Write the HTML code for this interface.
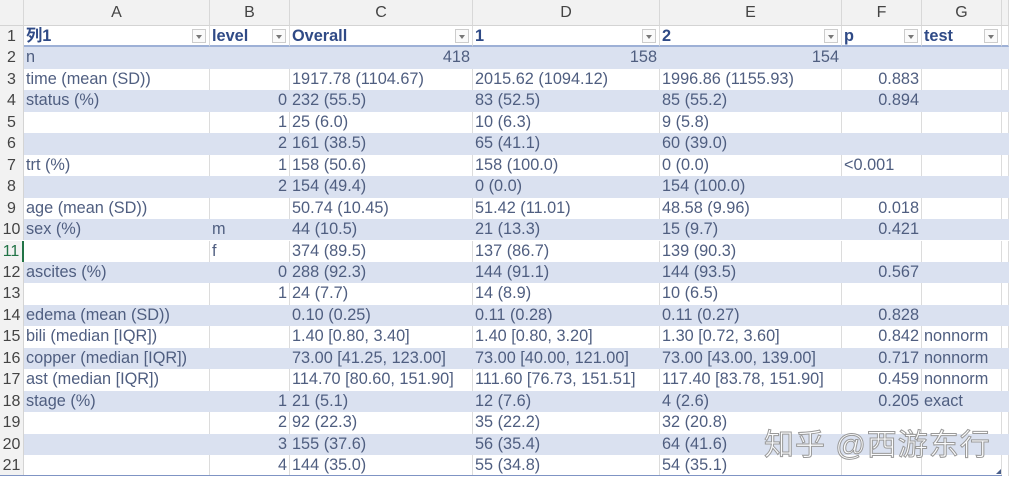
<!DOCTYPE html>
<html><head><meta charset="utf-8"><style>
body{margin:0;width:1009px;height:480px;overflow:hidden;background:#fff;font-family:"Liberation Sans","Noto Sans CJK SC",sans-serif;}
.hdr{position:absolute;top:0;height:26px;background:#f2f2f2;border-bottom:1px solid #d4d4d4;box-sizing:border-box;color:#444;font-size:16px;line-height:26px;text-align:center;border-right:1px solid #d8d8d8}
.r{position:absolute;left:0;width:1009px;height:21.45px;}
.r.b{background:#dae1f0}
.c{position:absolute;top:0;height:100%;box-sizing:border-box;border-right:1px solid #dcdcdc;font-size:16.3px;line-height:21px;color:#4f5e80;padding:0 2px;white-space:nowrap;overflow:visible}
.b .c{border-right-color:#dae1f0}
.rn{position:absolute;left:0;width:24px;top:0;height:100%;background:#f2f2f2;color:#444;font-size:16px;line-height:21px;text-align:center;border-right:1px solid #d4d4d4;box-sizing:border-box}
.R{text-align:right}
.h .c{font-weight:bold;color:#2f4a86;border-bottom:2px solid #9db0d6}
.dd{position:absolute;right:3px;top:3px;width:14px;height:14px;border:1px solid #ccc;background:#fafafa;box-sizing:border-box}
.dd:after{content:"";position:absolute;left:3px;top:5px;border-left:3px solid transparent;border-right:3px solid transparent;border-top:4px solid #777}
.wm{position:absolute;left:764px;top:420px;font-size:30px;color:rgba(255,255,255,.85);-webkit-text-stroke:1px #999;letter-spacing:1px}
</style></head><body>
<div class="hdr" style="left:0;width:24px"></div>
<div class="hdr" style="left:24px;width:186px">A</div>
<div class="hdr" style="left:210px;width:80px">B</div>
<div class="hdr" style="left:290px;width:183px">C</div>
<div class="hdr" style="left:473px;width:187px">D</div>
<div class="hdr" style="left:660px;width:182px">E</div>
<div class="hdr" style="left:842px;width:80px">F</div>
<div class="hdr" style="left:922px;width:80px">G</div>
<div class="hdr" style="left:1002px;width:7px"></div>

<div id="rows"></div>
<script>
const W=[[24,186],[210,80],[290,183],[473,187],[660,182],[842,80],[922,80],[1002,7]];
const D=[
["列1","level","Overall","1","2","p","test"],
["n","","|418","|158","|154","",""],
["time (mean (SD))","","1917.78 (1104.67)","2015.62 (1094.12)","1996.86 (1155.93)","|0.883",""],
["status (%)","|0","232 (55.5)","83 (52.5)","85 (55.2)","|0.894",""],
["","|1","25 (6.0)","10 (6.3)","9 (5.8)","",""],
["","|2","161 (38.5)","65 (41.1)","60 (39.0)","",""],
["trt (%)","|1","158 (50.6)","158 (100.0)","0 (0.0)","<0.001",""],
["","|2","154 (49.4)","0 (0.0)","154 (100.0)","",""],
["age (mean (SD))","","50.74 (10.45)","51.42 (11.01)","48.58 (9.96)","|0.018",""],
["sex (%)","m","44 (10.5)","21 (13.3)","15 (9.7)","|0.421",""],
["","f","374 (89.5)","137 (86.7)","139 (90.3)","",""],
["ascites (%)","|0","288 (92.3)","144 (91.1)","144 (93.5)","|0.567",""],
["","|1","24 (7.7)","14 (8.9)","10 (6.5)","",""],
["edema (mean (SD))","","0.10 (0.25)","0.11 (0.28)","0.11 (0.27)","|0.828",""],
["bili (median [IQR])","","1.40 [0.80, 3.40]","1.40 [0.80, 3.20]","1.30 [0.72, 3.60]","|0.842","nonnorm"],
["copper (median [IQR])","","73.00 [41.25, 123.00]","73.00 [40.00, 121.00]","73.00 [43.00, 139.00]","|0.717","nonnorm"],
["ast (median [IQR])","","114.70 [80.60, 151.90]","111.60 [76.73, 151.51]","117.40 [83.78, 151.90]","|0.459","nonnorm"],
["stage (%)","|1","21 (5.1)","12 (7.6)","4 (2.6)","|0.205","exact"],
["","|2","92 (22.3)","35 (22.2)","32 (20.8)","",""],
["","|3","155 (37.6)","56 (35.4)","64 (41.6)","",""],
["","|4","144 (35.0)","55 (34.8)","54 (35.1)","",""]];
let h="";
D.forEach((row,i)=>{
 const cls="r"+(i==0?" h":"")+(i%2==1?" b":"");
 h+=`<div class="${cls}" style="top:${26+i*21.45}px"><div class="rn" style="${i==10?'color:#217346;border-right:2px solid #217346':''}">${i+1}</div>`;
 W.forEach((w,j)=>{
  let t=j<7?row[j]:"",r="";
  if(t.startsWith("|")){t=t.slice(1);r=" R";}
  t=t.replace(/</g,"&lt;");
  h+=`<div class="c${r}" style="left:${w[0]}px;width:${w[1]}px">${t}${i==0&&j<7?'<span class="dd"></span>':''}</div>`;
 });
 h+="</div>";
});
document.getElementById("rows").innerHTML=h;
</script>
<div style="position:absolute;left:0;top:475px;width:1002px;height:1px;background:#7f94c4"></div>
<div style="position:absolute;left:996px;top:469px;border-left:5px solid transparent;border-bottom:5px solid #4a5f8a"></div>
<div class="wm">知乎 @西游东行</div>
</body></html>
